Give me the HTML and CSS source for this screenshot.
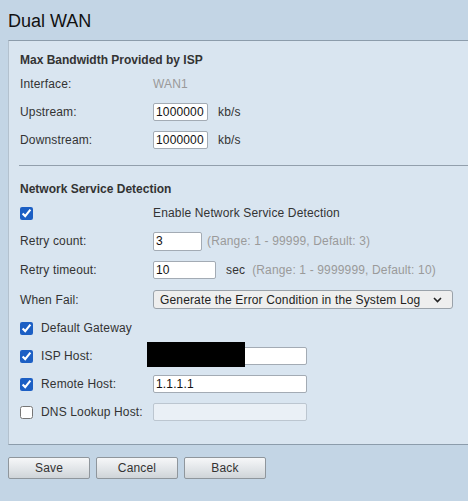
FILE: index.html
```html
<!DOCTYPE html>
<html lang="en">
<head>
    <meta charset="UTF-8">
    <meta name="viewport" content="width=device-width, initial-scale=1.0">
    <title>Dual WAN</title>
    <link rel="stylesheet" href="styles.css">
</head>
<body>
    <h1 class="page-title">Dual WAN</h1>

    <div class="panel">
        <div class="section">
            <h2 class="section-title">Max Bandwidth Provided by ISP</h2>
            <div class="row">
                <span class="label">Interface:</span>
                <span class="muted">WAN1</span>
            </div>
            <div class="row">
                <span class="label">Upstream:</span>
                <input type="text" class="field field-bw" value="1000000">
                <span class="unit">kb/s</span>
            </div>
            <div class="row">
                <span class="label">Downstream:</span>
                <input type="text" class="field field-bw" value="1000000">
                <span class="unit">kb/s</span>
            </div>
        </div>

        <div class="section section-split">
            <h2 class="section-title">Network Service Detection</h2>
            <div class="row">
                <span class="label"><input type="checkbox" class="check" checked></span>
                <span>Enable Network Service Detection</span>
            </div>
            <div class="row">
                <span class="label">Retry count:</span>
                <input type="text" class="field field-count" value="3">
                <span class="hint hint-near">(Range: 1 - 99999, Default: 3)</span>
            </div>
            <div class="row row-tall">
                <span class="label">Retry timeout:</span>
                <input type="text" class="field field-timeout" value="10">
                <span class="unit">sec</span>
                <span class="hint">(Range: 1 - 9999999, Default: 10)</span>
            </div>
            <div class="row row-fail">
                <span class="label">When Fail:</span>
                <div class="select-wrap">
                    <select class="select">
                        <option>Generate the Error Condition in the System Log</option>
                    </select>
                    <svg class="chevron" width="9" height="6" viewBox="0 0 9 6">
                        <path d="M1 1 L4.5 4.5 L8 1" fill="none" stroke="#222" stroke-width="1.6"/>
                    </svg>
                </div>
            </div>
            <div class="row">
                <label class="label check-label"><input type="checkbox" class="check" checked>Default Gateway</label>
            </div>
            <div class="row">
                <label class="label check-label"><input type="checkbox" class="check" checked>ISP Host:</label>
                <div class="redact-wrap">
                    <input type="text" class="field field-host" value="">
                    <span class="redact"></span>
                </div>
            </div>
            <div class="row">
                <label class="label check-label"><input type="checkbox" class="check" checked>Remote Host:</label>
                <input type="text" class="field field-host" value="1.1.1.1">
            </div>
            <div class="row">
                <label class="label check-label"><input type="checkbox" class="check">DNS Lookup Host:</label>
                <input type="text" class="field field-host" value="" disabled>
            </div>
        </div>
    </div>

    <div class="actions">
        <button class="btn">Save</button>
        <button class="btn">Cancel</button>
        <button class="btn">Back</button>
    </div>
</body>
</html>
```

FILE: styles.css
```css
* {
    box-sizing: border-box;
}

body {
    margin: 0;
    background: #c3d5e5;
    font-family: "Liberation Sans", Arial, sans-serif;
    font-size: 12px;
    letter-spacing: 0.15px;
    color: #333;
    overflow: hidden;
}

.page-title {
    margin: 11px 0 8px 8px;
    font-size: 18px;
    line-height: 21px;
    font-weight: normal;
    letter-spacing: 0;
    color: #111;
}

/* main content panel, runs off the right edge */
.panel {
    margin-left: 8px;
    padding-left: 10px;
    background: #d9e5f0;
    border-top: 1px solid #8c9cab;
    border-left: 1px solid #b3c1ce;
    border-bottom: 1px solid #8c9cab;
}

.section {
    padding: 9px 0 11px 1px;
}

.section-split {
    border-top: 1px solid #929fac;
    padding: 13px 0 18px 1px;
}

.section-title {
    margin: 0;
    font-size: 12px;
    line-height: 20px;
    font-weight: bold;
    letter-spacing: 0;
    color: #333;
}

.row {
    display: flex;
    align-items: center;
    height: 28px;
}

.row-tall {
    height: 30px;
}

.row-fail {
    height: 29px;
}

.label {
    width: 133px;
    flex-shrink: 0;
    display: flex;
    align-items: center;
}

.muted {
    color: #999;
}

.check {
    width: 13px;
    height: 13px;
    margin: 0 8px 0 0;
    accent-color: #1c5fc4;
}

.check-label {
    cursor: pointer;
}

.field {
    height: 18px;
    padding: 0 2px;
    border: 1px solid #a3abb4;
    border-radius: 2px;
    background: #fff;
    font-family: "Liberation Sans", Arial, sans-serif;
    font-size: 12px;
    letter-spacing: 0.15px;
    color: #111;
}

.field:disabled {
    background: #eaf0f6;
    border-color: #bcc6d0;
}

.field-bw {
    width: 55px;
}

.field-count {
    width: 49px;
    height: 19px;
}

.field-timeout {
    width: 63px;
}

.field-host {
    width: 154px;
}

.unit {
    margin-left: 10px;
}

.hint {
    margin-left: 7px;
    color: #9a9a9a;
}

.hint-near {
    margin-left: 5px;
}

.select-wrap {
    position: relative;
}

.select {
    appearance: none;
    width: 300px;
    height: 19px;
    padding: 0 0 0 6px;
    border: 1px solid #9aa2aa;
    border-radius: 3px;
    background: #eeeeee;
    font-family: "Liberation Sans", Arial, sans-serif;
    font-size: 12px;
    letter-spacing: 0.15px;
    color: #222;
}

.chevron {
    position: absolute;
    right: 11px;
    top: 7px;
    pointer-events: none;
}

.redact-wrap {
    position: relative;
    display: flex;
}

/* blacked-out value */
.redact {
    position: absolute;
    left: -6px;
    top: -5px;
    width: 98px;
    height: 25px;
    background: #000;
}

.actions {
    display: flex;
    gap: 6px;
    margin: 12px 0 0 8px;
}

.btn {
    width: 82px;
    height: 22px;
    border: 1px solid #8f969c;
    border-radius: 2px;
    background: linear-gradient(#f6f7f8, #dfe3e6 60%, #cfd4d8);
    font-family: "Liberation Sans", Arial, sans-serif;
    font-size: 12px;
    letter-spacing: 0.15px;
    color: #333;
    cursor: pointer;
}
```
